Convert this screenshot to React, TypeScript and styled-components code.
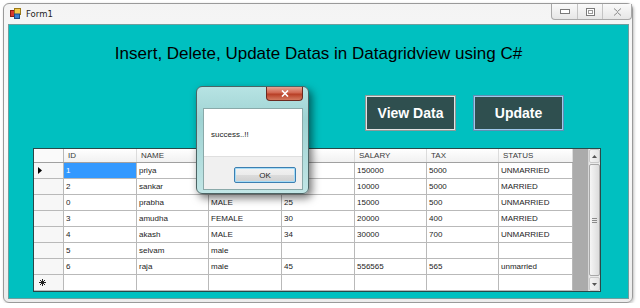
import styled, { createGlobalStyle } from "styled-components";

const GlobalStyle = createGlobalStyle`
  html, body {
    margin: 0;
    padding: 0;
    background: #ffffff;
    font-family: "Liberation Sans", Arial, sans-serif;
  }
`;

const Page = styled.div`
  padding: 3px 0 0 3px;
`;

const Window = styled.div`
  position: relative;
  box-sizing: border-box;
  width: 630px;
  height: 300px;
  border: 1px solid #9a9a9a;
  border-radius: 6px;
  background: linear-gradient(180deg, #f4f4f4 0%, #fbfbfb 40%, #ececec 100%);
  box-shadow: 1px 1px 3px rgba(0, 0, 0, 0.25);
  display: flex;
  flex-direction: column;
`;

const TitleBar = styled.div`
  height: 20px;
  display: flex;
  align-items: flex-start;
  padding-left: 6px;
`;

const AppIcon = styled.svg`
  margin-top: 4px;
  width: 11px;
  height: 11px;
`;

const Caption = styled.span`
  margin: 5px 0 0 5px;
  font-family: "DejaVu Sans", "Noto Sans", sans-serif;
  font-size: 8.5px;
  color: #1e1e1e;
`;

const CaptionButtons = styled.div`
  margin-left: auto;
  display: flex;
  height: 15px;
  border: 1px solid #a8a8a8;
  border-top: none;
  border-radius: 0 0 4px 4px;
  background: linear-gradient(180deg, #fafafa, #e6e6e6);
  overflow: hidden;
`;

const CaptionButton = styled.div<{ $w: number }>`
  width: ${(p) => p.$w}px;
  display: flex;
  align-items: center;
  justify-content: center;
  & + & {
    border-left: 1px solid #c4c4c4;
  }
`;

const Client = styled.div`
  box-sizing: border-box;
  height: 275px;
  margin: 0 3px 3px 4px;
  background: #00c0c0;
  border: 1px solid #6f9e9e;
  display: flex;
  flex-direction: column;
`;

const Heading = styled.h1`
  margin: 19px 0 0;
  height: 20px;
  line-height: 20px;
  font-size: 17px;
  font-weight: normal;
  text-align: center;
  color: #000;
`;

const ButtonRow = styled.div`
  margin-top: 32px;
  display: flex;
  justify-content: flex-end;
  gap: 19px;
  padding-right: 65px;
`;

const ActionButton = styled.button<{ $focus?: boolean }>`
  box-sizing: border-box;
  width: 89px;
  height: 34px;
  padding: 0;
  background: #2f4f4f;
  color: #fff;
  font-family: "Liberation Sans", Arial, sans-serif;
  font-size: 14px;
  font-weight: bold;
  border: 1px solid ${(p) => (p.$focus ? "#9fc7ea" : "#e2e2e2")};
  box-shadow: 0 0 0 1px ${(p) => (p.$focus ? "#5e8fb4" : "#8a9a9a")};
`;

const GridView = styled.div`
  margin: 18px 0 0 24px;
  box-sizing: border-box;
  width: 568px;
  border: 1px solid #2a4848;
  background: #ababab;
  display: flex;
`;

const GridTable = styled.div`
  width: 539px;
  display: flex;
  flex-direction: column;
  background: #ffffff;
`;

const Row = styled.div<{ $header?: boolean }>`
  display: flex;
  height: ${(p) => (p.$header ? 14 : 16)}px;
  box-sizing: border-box;
  border-bottom: 1px solid ${(p) => (p.$header ? "#a0a0a0" : "#b9b9b9")};
`;

const RowHeader = styled.div<{ $header?: boolean }>`
  box-sizing: border-box;
  width: 30px;
  border-right: 1px solid #b9b9b9;
  background: ${(p) => (p.$header ? "#fafafa" : "#f7f7f7")};
  display: flex;
  align-items: center;
  padding-left: 4px;
`;

const HeaderCell = styled.div<{ $w: number }>`
  box-sizing: border-box;
  width: ${(p) => p.$w}px;
  padding-left: 4px;
  border-right: 1px solid #dcdcdc;
  background: linear-gradient(180deg, #ffffff, #f1f1f1);
  font-size: 8px;
  line-height: 13px;
  color: #3a3a3a;
`;

const Cell = styled.div<{ $w: number; $selected?: boolean }>`
  box-sizing: border-box;
  width: ${(p) => p.$w}px;
  padding-left: 2px;
  border-right: 1px solid #b9b9b9;
  background: ${(p) => (p.$selected ? "#3399ff" : "#ffffff")};
  color: ${(p) => (p.$selected ? "#ffffff" : "#1c1c1c")};
  font-size: 8px;
  line-height: 15px;
  white-space: nowrap;
  overflow: hidden;
`;

const ScrollBar = styled.div`
  margin-left: auto;
  width: 11px;
  background: #eaeaea;
  border-left: 1px solid #d8d8d8;
  display: flex;
  flex-direction: column;
  padding: 0 0 0 0;
`;

const ScrollArrow = styled.div`
  height: 14px;
  display: flex;
  align-items: center;
  justify-content: center;
  background: linear-gradient(90deg, #f4f4f4, #e4e4e4);
  border: 1px solid #c9c9c9;
  box-sizing: border-box;
  border-radius: 2px;
`;

const ScrollThumb = styled.div`
  flex: 1;
  margin: 1px 0;
  border: 1px solid #a8a8a8;
  border-radius: 2px;
  background: linear-gradient(90deg, #f6f6f6, #dcdcdc);
  display: flex;
  align-items: center;
  justify-content: center;
`;

const MessageBox = styled.div`
  position: absolute;
  left: 192px;
  top: 82px;
  width: 113px;
  height: 108px;
  box-sizing: border-box;
  border: 1px solid #4c6464;
  border-radius: 6px;
  background: linear-gradient(180deg, #b7e3e3 0%, #9fd3d3 30%, #c2e6e6 100%);
  box-shadow: 3px 4px 9px rgba(0, 0, 0, 0.55);
  display: flex;
  flex-direction: column;
  padding: 0 5px 3px 6px;
`;

const DialogTitle = styled.div`
  height: 21px;
  display: flex;
  justify-content: flex-end;
  align-items: flex-start;
`;

const CloseButton = styled.div`
  width: 37px;
  height: 14px;
  border: 1px solid #6b2a20;
  border-top: none;
  border-radius: 0 0 4px 4px;
  background: linear-gradient(180deg, #e8a493 0%, #d0664f 45%, #b83f26 55%, #d47a5f 100%);
  display: flex;
  align-items: center;
  justify-content: center;
  box-sizing: border-box;
`;

const DialogBody = styled.div`
  flex: 1;
  display: flex;
  flex-direction: column;
  border: 1px solid #8aa9a9;
  background: #ffffff;
`;

const Message = styled.div`
  height: 47px;
  padding: 21px 0 0 7px;
  box-sizing: border-box;
  font-size: 8px;
  color: #222;
`;

const DialogFooter = styled.div`
  flex: 1;
  background: #f0f0f0;
  border-top: 1px solid #dfdfdf;
  display: flex;
  justify-content: flex-end;
  align-items: flex-start;
  padding: 10px 6px 0 0;
`;

const OkButton = styled.button`
  width: 62px;
  height: 16px;
  padding: 0;
  border: 1px solid #3c7fb1;
  border-radius: 2px;
  box-shadow: inset 0 0 0 1px #a6dcf7;
  background: linear-gradient(180deg, #f2f2f2 0%, #ebebeb 50%, #dcdcdc 51%, #cfcfcf 100%);
  font-family: "Liberation Sans", Arial, sans-serif;
  font-size: 8px;
  color: #222;
`;

const columns = [
  { name: "ID", w: 73 },
  { name: "NAME", w: 72 },
  { name: "GENDER", w: 73 },
  { name: "AGE", w: 73 },
  { name: "SALARY", w: 72 },
  { name: "TAX", w: 72 },
  { name: "STATUS", w: 74 },
];

const rows = [
  ["1", "priya", "FEMALE", "", "150000", "5000", "UNMARRIED"],
  ["2", "sankar", "MALE", "", "10000", "5000", "MARRIED"],
  ["0", "prabha", "MALE", "25", "15000", "500", "UNMARRIED"],
  ["3", "amudha", "FEMALE", "30", "20000", "400", "MARRIED"],
  ["4", "akash", "MALE", "34", "30000", "700", "UNMARRIED"],
  ["5", "selvam", "male", "", "", "", ""],
  ["6", "raja", "male", "45", "556565", "565", "unmarried"],
  ["", "", "", "", "", "", ""],
];

const Triangle = () => (
  <svg width="4" height="7" viewBox="0 0 4 7">
    <path d="M0 0 L4 3.5 L0 7 Z" fill="#000" />
  </svg>
);

const NewRowStar = () => (
  <svg width="7" height="7" viewBox="0 0 7 7" style={{ marginLeft: 1 }}>
    <path d="M3.5 0 V7 M0 3.5 H7 M1 1 L6 6 M6 1 L1 6" stroke="#222" strokeWidth="1" />
  </svg>
);

export default function App() {
  return (
    <Page>
      <GlobalStyle />
      <Window>
        <TitleBar>
          <AppIcon viewBox="0 0 11 11">
            <rect x="0.5" y="2.5" width="6" height="6" fill="#d8382c" stroke="#8a1a12" />
            <rect x="4.5" y="0.5" width="6" height="6" fill="#f3c84a" stroke="#9a7a18" />
            <rect x="4.5" y="6" width="5" height="4.5" fill="#3a7fd0" stroke="#1d4c86" />
          </AppIcon>
          <Caption>Form1</Caption>
          <CaptionButtons>
            <CaptionButton $w={25}>
              <svg width="10" height="5" viewBox="0 0 10 5">
                <rect x="0.5" y="0.5" width="9" height="4" fill="#fff" stroke="#7a7a7a" />
              </svg>
            </CaptionButton>
            <CaptionButton $w={24}>
              <svg width="9" height="8" viewBox="0 0 9 8">
                <rect x="0.5" y="0.5" width="8" height="7" fill="#fff" stroke="#7a7a7a" />
                <rect x="2.5" y="2.5" width="4" height="3" fill="none" stroke="#9a9a9a" />
              </svg>
            </CaptionButton>
            <CaptionButton $w={28}>
              <svg width="9" height="8" viewBox="0 0 9 8">
                <path d="M1 0.5 L4.5 3.5 L8 0.5 M1 7.5 L4.5 4.5 L8 7.5" stroke="#8a8a8a" fill="none" />
              </svg>
            </CaptionButton>
          </CaptionButtons>
        </TitleBar>
        <Client>
          <Heading>Insert, Delete, Update Datas in Datagridview using C#</Heading>
          <ButtonRow>
            <ActionButton>View Data</ActionButton>
            <ActionButton $focus>Update</ActionButton>
          </ButtonRow>
          <GridView>
            <GridTable>
              <Row $header>
                <RowHeader $header />
                {columns.map((c) => (
                  <HeaderCell key={c.name} $w={c.w}>
                    {c.name}
                  </HeaderCell>
                ))}
              </Row>
              {rows.map((r, i) => (
                <Row key={i}>
                  <RowHeader>
                    {i === 0 && <Triangle />}
                    {i === rows.length - 1 && <NewRowStar />}
                  </RowHeader>
                  {r.map((v, j) => (
                    <Cell key={j} $w={columns[j].w} $selected={i === 0 && j === 0}>
                      {v}
                    </Cell>
                  ))}
                </Row>
              ))}
            </GridTable>
            <ScrollBar>
              <ScrollArrow>
                <svg width="5" height="3" viewBox="0 0 5 3">
                  <path d="M0 3 L2.5 0 L5 3 Z" fill="#555" />
                </svg>
              </ScrollArrow>
              <ScrollThumb>
                <svg width="5" height="5" viewBox="0 0 5 5">
                  <path d="M0 0.5 H5 M0 2.5 H5 M0 4.5 H5" stroke="#8a8a8a" />
                </svg>
              </ScrollThumb>
              <ScrollArrow>
                <svg width="5" height="3" viewBox="0 0 5 3">
                  <path d="M0 0 L2.5 3 L5 0 Z" fill="#555" />
                </svg>
              </ScrollArrow>
            </ScrollBar>
          </GridView>
        </Client>
        <MessageBox>
          <DialogTitle>
            <CloseButton>
              <svg width="8" height="7" viewBox="0 0 8 7">
                <path d="M1 0.5 L7 6.5 M7 0.5 L1 6.5" stroke="#fff" strokeWidth="1.6" />
              </svg>
            </CloseButton>
          </DialogTitle>
          <DialogBody>
            <Message>success..!!</Message>
            <DialogFooter>
              <OkButton>OK</OkButton>
            </DialogFooter>
          </DialogBody>
        </MessageBox>
      </Window>
    </Page>
  );
}
